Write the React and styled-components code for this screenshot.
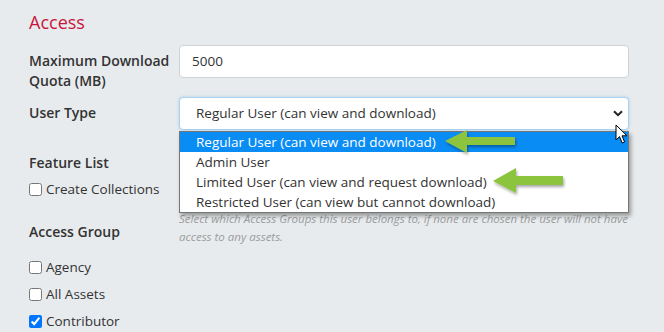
import React from 'react';
import styled, { createGlobalStyle } from 'styled-components';

const GlobalStyle = createGlobalStyle`
  html, body {
    margin: 0;
    padding: 0;
    background: #e8ebed;
  }
  body {
    font-family: "Open Sans", "Liberation Sans", sans-serif;
    color: #333;
    width: 664px;
    height: 332px;
    overflow: hidden;
  }
`;

const Page = styled.div`
  padding: 10px 0 0 29px;
`;

const Heading = styled.h2`
  margin: -1px 0 10px;
  font-size: 18px;
  font-weight: 400;
  line-height: 26px;
  color: #c8163c;
`;

const Row = styled.div`
  display: grid;
  grid-template-columns: 150px 450px;
  align-items: start;
  margin-bottom: ${(p) => p.$gap || 0}px;
`;

const Label = styled.div`
  font-size: 14px;
  font-weight: 600;
  line-height: 20px;
  padding-top: ${(p) => p.$top || 0}px;
  margin-bottom: ${(p) => p.$bottom || 0}px;
`;

const TextInput = styled.div`
  box-sizing: border-box;
  height: 33px;
  padding: 0 12px;
  background: #fff;
  border: 1px solid #cfd3d6;
  border-radius: 4px;
  font-size: 13.5px;
  line-height: 31px;
  color: #333;
`;

const SelectWrap = styled.div`
  position: relative;
`;

const SelectBox = styled.div`
  box-sizing: border-box;
  height: 33px;
  padding: 0 5px 0 16px;
  background: #fff;
  border: 1px solid #a9d2f0;
  border-radius: 4px;
  box-shadow: 0 0 3px rgba(102, 175, 233, 0.5);
  font-size: 13.5px;
  line-height: 31px;
  color: #333;
  display: flex;
  align-items: center;
  justify-content: space-between;
`;

const DropList = styled.ul`
  position: absolute;
  top: 34px;
  left: 0;
  right: 0;
  margin: 0;
  padding: 0;
  list-style: none;
  background: #fff;
  border: 1px solid #767676;
  box-shadow: 2px 3px 4px rgba(0, 0, 0, 0.35);
  z-index: 2;
`;

const Option = styled.li`
  padding: 0 16px;
  height: 20px;
  font-size: 13.5px;
  line-height: 20px;
  background: ${(p) => (p.$active ? '#0a8cf5' : 'transparent')};
  color: ${(p) => (p.$active ? '#fff' : '#333')};
`;

const Arrows = styled.svg`
  position: absolute;
  left: 260px;
  top: 30px;
  z-index: 3;
  overflow: visible;
`;

const Cursor = styled.svg`
  position: absolute;
  left: 436px;
  top: 27px;
  z-index: 4;
`;

const Columns = styled.div`
  display: grid;
  grid-template-columns: 150px 452px;
  margin-top: 23px;
`;

const CheckRow = styled.label`
  display: flex;
  align-items: center;
  gap: 4px;
  font-size: 13.5px;
  line-height: 20px;
  height: 20px;
  margin-bottom: ${(p) => p.$bottom || 0}px;
`;

const Box = styled.input`
  margin: 0;
  width: 13px;
  height: 13px;
  accent-color: #0075ff;
`;

const Help = styled.p`
  margin: 57px 0 0;
  font-size: 11.5px;
  font-style: italic;
  line-height: 18px;
  color: #9a9da0;
`;

const Chevron = () => (
  <svg width="10" height="7" viewBox="0 0 10 7">
    <path d="M1 1.2 L5 5.2 L9 1.2" fill="none" stroke="#222" strokeWidth="2" />
  </svg>
);

export default function App() {
  return (
    <Page>
      <GlobalStyle />
      <Heading>Access</Heading>
      <Row $gap={6}>
        <Label $top={6}>
          Maximum Download
          <br />
          Quota (MB)
        </Label>
        <TextInput>5000</TextInput>
      </Row>
      <Row>
        <Label $top={6}>User Type</Label>
        <SelectWrap>
          <SelectBox>
            <span>Regular User (can view and download)</span>
            <Chevron />
          </SelectBox>
          <DropList>
            <Option $active>Regular User (can view and download)</Option>
            <Option>Admin User</Option>
            <Option>Limited User (can view and request download)</Option>
            <Option>Restricted User (can view but cannot download)</Option>
          </DropList>
          <Arrows width="130" height="70" viewBox="0 0 130 70">
            <defs>
              <filter id="sh" x="-20%" y="-40%" width="150%" height="190%">
                <feDropShadow dx="1" dy="2" stdDeviation="1.5" floodColor="#000" floodOpacity="0.35" />
              </filter>
            </defs>
            <g fill="#8cc43c" filter="url(#sh)">
              <path d="M6 14 L28 3 L28 10 L76 10 L76 18 L28 18 L28 26 Z" />
              <path d="M54 54 L77 41 L77 49 L124 49 L124 58 L77 58 L77 66 Z" />
            </g>
          </Arrows>
          <Cursor width="14" height="22" viewBox="0 0 14 22">
            <path
              d="M1 1 L1 16 L4.5 12.6 L7.2 19 L9.6 18 L7 11.8 L12 11.8 Z"
              fill="#fff"
              stroke="#000"
              strokeWidth="1"
              strokeLinejoin="round"
            />
          </Cursor>
        </SelectWrap>
      </Row>
      <Columns>
        <div>
          <Label $bottom={6}>Feature List</Label>
          <CheckRow $bottom={23}>
            <Box type="checkbox" readOnly />
            Create Collections
          </CheckRow>
          <Label $bottom={15}>Access Group</Label>
          <CheckRow $bottom={7}>
            <Box type="checkbox" readOnly />
            Agency
          </CheckRow>
          <CheckRow $bottom={7}>
            <Box type="checkbox" readOnly />
            All Assets
          </CheckRow>
          <CheckRow>
            <Box type="checkbox" checked readOnly />
            Contributor
          </CheckRow>
        </div>
        <Help>
          Select which Access Groups this user belongs to, if none are chosen the user will not have
          access to any assets.
        </Help>
      </Columns>
    </Page>
  );
}
